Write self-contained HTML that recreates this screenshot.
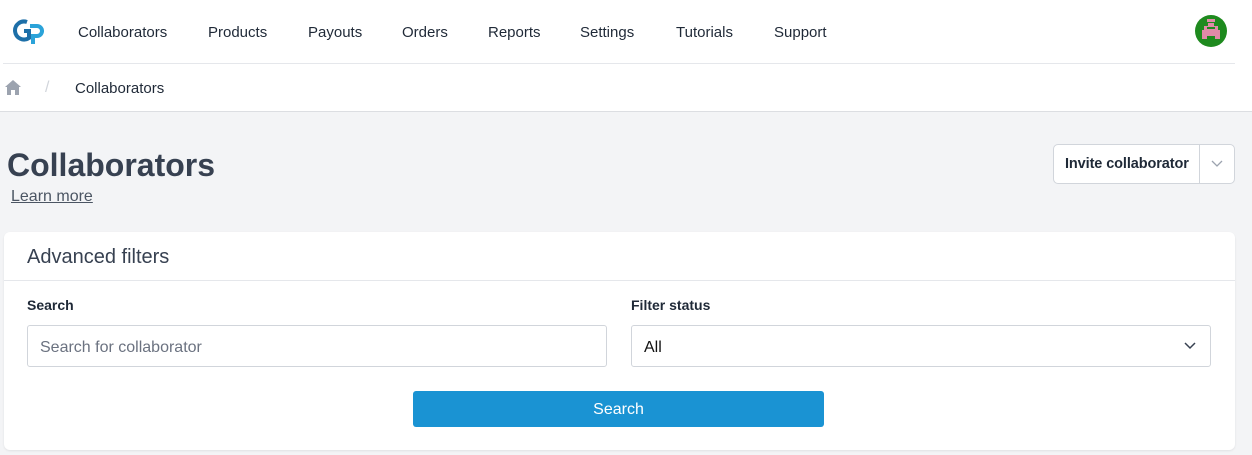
<!DOCTYPE html>
<html><head><meta charset="utf-8"><style>
*{box-sizing:border-box;margin:0;padding:0}
body{width:1252px;height:455px;overflow:hidden;background:#f3f4f6;font-family:"Liberation Sans",sans-serif;color:#1f2937;position:relative}
.hdr{position:absolute;left:0;top:0;width:1252px;height:112px;background:#fff;border-bottom:1px solid #dcdee2}
.line{position:absolute;left:3px;top:63px;width:1232px;height:1px;background:#e5e7eb}
.nav{position:absolute;top:24px;font-size:15px;color:#1f2937}
.t{position:absolute}
.card{position:absolute;left:4px;top:232px;width:1231px;height:218px;background:#fff;border-radius:6px;box-shadow:0 1px 2px rgba(0,0,0,.08)}
.inp{position:absolute;height:42px;border:1px solid #d1d5db;border-radius:3px;font-size:16px;padding:13px 12px 0}
</style></head><body>
<div class="hdr">
<svg style="position:absolute;left:13px;top:18px" width="34" height="28" viewBox="0 0 34 28"><path d="M14 4 A9 9 0 1 0 16 20 L16 13 L11 13" fill="none" stroke="#1d6fa8" stroke-width="4"/><path d="M17 8 L24 8 A5 5 0 0 1 24 18 L20 18 L20 26" fill="none" stroke="#2ba3d9" stroke-width="4"/><rect x="28" y="12" width="3" height="2" fill="#2ba3d9"/></svg>
<div class="nav" style="left:78px">Collaborators</div>
<div class="nav" style="left:208px">Products</div>
<div class="nav" style="left:308px">Payouts</div>
<div class="nav" style="left:402px">Orders</div>
<div class="nav" style="left:488px">Reports</div>
<div class="nav" style="left:580px">Settings</div>
<div class="nav" style="left:676px">Tutorials</div>
<div class="nav" style="left:774px">Support</div>
<svg style="position:absolute;left:1195px;top:15px" width="32" height="32" viewBox="0 0 32 32"><circle cx="16" cy="16" r="16" fill="#1e8a1e"/><rect x="12" y="4" width="8" height="3" fill="#e08aa8"/><rect x="13" y="8" width="6" height="3" fill="#e08aa8"/><rect x="9" y="11" width="14" height="4" fill="#e08aa8"/><rect x="12" y="12" width="8" height="2" fill="#1e8a1e"/><rect x="7" y="15" width="18" height="6" fill="#e08aa8"/><rect x="7" y="21" width="5" height="3" fill="#e08aa8"/><rect x="20" y="21" width="5" height="3" fill="#e08aa8"/></svg>
<div class="line"></div>
<svg style="position:absolute;left:5px;top:80px" width="16" height="15" viewBox="0 0 16 15"><path d="M8 0 L16 7 L14 7 L14 15 L10 15 L10 10 L6 10 L6 15 L2 15 L2 7 L0 7Z" fill="#9ca3af"/></svg>
<div class="t" style="left:45px;top:79px;color:#d1d5db;font-size:16px">/</div>
<div class="t" style="left:75px;top:80px;font-size:15px">Collaborators</div>
</div>
<div class="t" style="left:7px;top:147px;font-size:32px;font-weight:bold;color:#374151">Collaborators</div>
<div class="t" style="left:11px;top:188px;font-size:16px;color:#4b5563;text-decoration:underline">Learn more</div>
<div class="t" style="left:1053px;top:144px;width:182px;height:40px;background:#fff;border:1px solid #d1d5db;border-radius:5px">
<div class="t" style="left:11px;top:11px;font-size:14.5px;font-weight:bold;letter-spacing:-0.1px">Invite collaborator</div>
<div class="t" style="left:145px;top:0;width:1px;height:38px;background:#d1d5db"></div>
<svg style="position:absolute;left:157px;top:15px" width="12" height="8" viewBox="0 0 12 8"><path d="M1 1 L6 6 L11 1" fill="none" stroke="#9ca3af" stroke-width="1.3"/></svg>
</div>
<div class="card">
<div class="t" style="left:23px;top:14px;font-size:20px;color:#374151">Advanced filters</div>
<div class="t" style="left:0;top:48px;width:1231px;height:1px;background:#e5e7eb"></div>
<div class="t" style="left:23px;top:65px;font-size:14px;font-weight:bold">Search</div>
<div class="t" style="left:627px;top:65px;font-size:14px;font-weight:bold">Filter status</div>
<div class="inp" style="left:23px;top:93px;width:580px;color:#6b7280">Search for collaborator</div>
<div class="inp" style="left:627px;top:93px;width:580px;color:#111">All
<svg style="position:absolute;right:14px;top:16px" width="12" height="8" viewBox="0 0 12 8"><path d="M1 1 L6 6 L11 1" fill="none" stroke="#374151" stroke-width="1.5"/></svg></div>
<div class="t" style="left:409px;top:159px;width:411px;height:36px;background:#1a93d3;border-radius:3px;color:#fff;font-size:16px;text-align:center;line-height:38px">Search</div>
</div>
</body></html>
